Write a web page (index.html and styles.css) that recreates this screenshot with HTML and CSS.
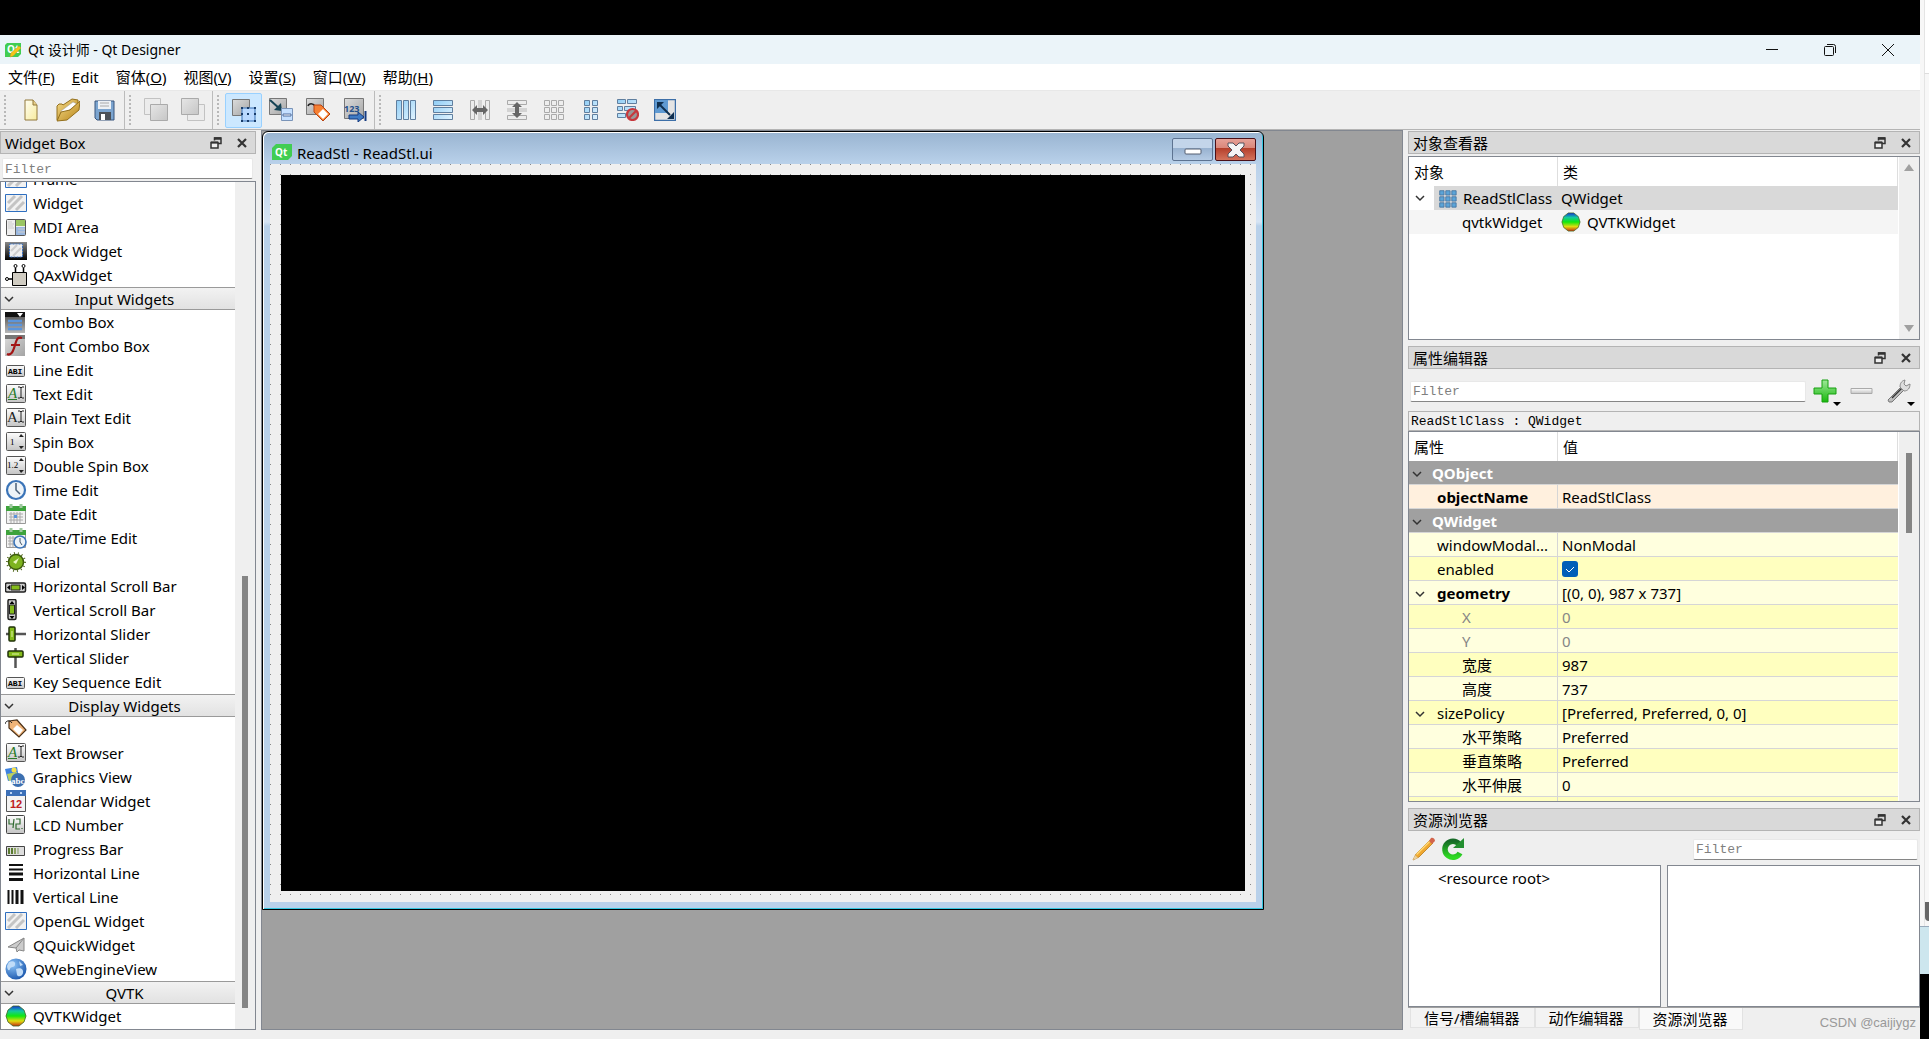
FILE: index.html
```html
<!DOCTYPE html>
<html lang="zh-CN">
<head>
    <meta charset="UTF-8">
    <meta name="viewport" content="width=device-width, initial-scale=1.0">
    <title>Qt 设计师 - Qt Designer</title>
    <link rel="stylesheet" href="styles.css">
</head>
<body>
    <!-- gradients shared by the icons -->
    <svg class="gradients" aria-hidden="true">
        <defs>
            <linearGradient id="gSilver" x1="0" y1="0" x2="0" y2="1"><stop offset="0" stop-color="#fdfdfd"/><stop offset="1" stop-color="#c4c4c4"/></linearGradient>
            <linearGradient id="gGrey" x1="0" y1="0" x2="1" y2="1"><stop offset="0" stop-color="#dcdcdc"/><stop offset="1" stop-color="#a4a4a4"/></linearGradient>
            <linearGradient id="gLight" x1="0" y1="0" x2="1" y2="1"><stop offset="0" stop-color="#e6e6e6"/><stop offset="1" stop-color="#c6c6c6"/></linearGradient>
            <linearGradient id="gBlue" x1="0" y1="0" x2="1" y2="1"><stop offset="0" stop-color="#8fcdf5"/><stop offset="1" stop-color="#e2f4ff"/></linearGradient>
            <linearGradient id="gGold" x1="0" y1="0" x2="1" y2="1"><stop offset="0" stop-color="#f5dc8c"/><stop offset="1" stop-color="#b88416"/></linearGradient>
            <linearGradient id="gPaper" x1="0" y1="0" x2="1" y2="1"><stop offset="0" stop-color="#fffef2"/><stop offset="1" stop-color="#f7eb9d"/></linearGradient>
            <linearGradient id="gGreen" x1="0" y1="0" x2="0" y2="1"><stop offset="0" stop-color="#9fe89a"/><stop offset="1" stop-color="#18b80c"/></linearGradient>
            <linearGradient id="gReload" x1="0" y1="0" x2="0" y2="1"><stop offset="0" stop-color="#176b28"/><stop offset="1" stop-color="#2edb22"/></linearGradient>
            <linearGradient id="gVtk" x1="0" y1="0" x2="0" y2="1"><stop offset="0" stop-color="#1434d8"/><stop offset=".25" stop-color="#14c8a0"/><stop offset=".5" stop-color="#10e810"/><stop offset=".75" stop-color="#e0dc10"/><stop offset="1" stop-color="#c83010"/></linearGradient>
            <radialGradient id="gGlobe" cx=".35" cy=".3" r=".8"><stop offset="0" stop-color="#8cc4f8"/><stop offset="1" stop-color="#1450a8"/></radialGradient>
            <linearGradient id="gDark" x1="0" y1="0" x2="0" y2="1"><stop offset="0" stop-color="#444"/><stop offset="1" stop-color="#b8b8b8"/></linearGradient>
            <linearGradient id="gDock" x1="0" y1="0" x2="0" y2="1"><stop offset="0" stop-color="#888"/><stop offset="1" stop-color="#000"/></linearGradient>
        </defs>
    </svg>

    <!-- icon sprite -->
    <svg class="sprite" aria-hidden="true">
        <symbol id="chevron" viewBox="0 0 10 10"><path d="M1 3l4 4 4-4" fill="none" stroke="#333" stroke-width="1.5"/></symbol>
        <symbol id="float" viewBox="0 0 12 12"><path d="M4.500 3.500V1h6.500v5.500H8" fill="none" stroke="#333" stroke-width="1.500"/><path d="M4 1.500h7" stroke="#333" stroke-width="2.500"/><path d="M1 5.500h7V11H1z" fill="#eee" stroke="#333" stroke-width="1.500"/><path d="M1 5.500h7" stroke="#333" stroke-width="2"/></symbol>
        <symbol id="cross" viewBox="0 0 12 12"><path d="M2 2l8 8M10 2l-8 8" stroke="#333" stroke-width="2.200"/></symbol>
        <symbol id="designer" viewBox="0 0 18 18"><path d="M3 2h14v11l-3 3H1V4z" fill="#41cd52"/><text x="3" y="12" class="ico-qt">Qt</text><path d="M6 16l1-4 8-7 2 2-8 8z" fill="#f5c518" stroke="#c99a20" stroke-width=".5"/></symbol>
        <symbol id="qt" viewBox="0 0 20 16"><path d="M4 0h16v12l-4 4H0V4z" fill="#41cd52"/><text x="3" y="12" class="ico-qt">Qt</text></symbol>
        <symbol id="new" viewBox="0 0 24 24"><path d="M6 2h8l4 5v15H6z" fill="url(#gPaper)" stroke="#92783a"/><path d="M14 2v5h4" fill="#e8cf88" stroke="#92783a"/></symbol>
        <symbol id="open" viewBox="0 0 24 24"><path d="M1 22V8l2-2h3l1 1 9-6 6 1v6z" fill="url(#gGold)" stroke="#94701c"/><path d="M5 13l12-9 4 2-9 7-7 4z" fill="#fff" stroke="#999" stroke-width=".5"/><path d="M1 23L5 14l9-2 10-9-1 9-12 10z" fill="url(#gGold)" stroke="#94701c"/></symbol>
        <symbol id="save" viewBox="0 0 24 24"><path d="M2 3h19v19H4l-2-2z" fill="#7ba4cf" stroke="#38557c"/><path d="M5 3h13v8H5z" fill="#edf1f5"/><path d="M7 5h9M7 8h9" stroke="#aaa"/><path d="M6 14h12v8H6z" fill="#4c5158"/><path d="M8 16h4v6H8z" fill="#fff"/></symbol>
        <symbol id="raise" viewBox="0 0 24 24"><path d="M.5.500h16v16H.5z" fill="#ececec" stroke="#c2c2c2"/><path d="M6.500 6.500h17v16h-17z" fill="url(#gLight)" stroke="#aaa"/></symbol>
        <symbol id="lower" viewBox="0 0 24 24"><path d="M6.500 6.500h17v16h-17z" fill="#ececec" stroke="#c2c2c2"/><path d="M.5.500h17v16H.5z" fill="url(#gLight)" stroke="#aaa"/></symbol>
        <symbol id="widgets" viewBox="0 0 24 24"><path d="M.5 1.500h17v16H.5z" fill="url(#gGrey)" stroke="#777"/><path d="M10 10h13v13H10z" fill="#b9d9ff" stroke="#3970b4"/><path d="M9 9h2v2H9zM15 9h2v2h-2zM22 9h2v2h-2zM9 15h2v2H9zM15 15h2v2h-2zM22 15h2v2h-2zM9 22h2v2H9zM15 22h2v2h-2zM22 22h2v2h-2z" fill="#183c6a"/></symbol>
        <symbol id="signals" viewBox="0 0 24 24"><path d="M.5.500h17v16H.5z" fill="url(#gGrey)" stroke="#777"/><path d="M1 2l10 9" stroke="#164455" stroke-width="2"/><path d="M13 13l-1-8-7 7z" fill="#164455"/><path d="M12.500 10.500h11v12h-11z" fill="#c5e0ff" stroke="#7a94b8"/><path d="M14 16h8v2h-8z" fill="#fff" stroke="#4c6a9c"/></symbol>
        <symbol id="buddies" viewBox="0 0 24 24"><path d="M.5.500h17v16H.5z" fill="url(#gGrey)" stroke="#777"/><path d="M2 8c1-3 5-3 7 0" fill="none" stroke="#222" stroke-width="1.500"/><path d="M8 7h7l9 9-7 7-9-9z" fill="#f68032" stroke="#b94312"/><path d="M17 11l5 5-5 5-5-5z" fill="#fff"/></symbol>
        <symbol id="taborder" viewBox="0 0 24 24"><path d="M1.500.500h19v20h-19z" fill="url(#gGrey)" stroke="#777"/><text x="1" y="14" class="ico-123">123</text><path d="M6 17h9v-3l6 5-6 5v-3H6z" fill="#3f7bc4" stroke="#143a80"/><path d="M22.500 13v10" stroke="#143a80" stroke-width="2"/></symbol>
        <symbol id="hlay" viewBox="0 0 22 22"><path d="M1.500 1.500h5v19h-5zM8.500 1.500h5v19h-5zM15.500 1.500h5v19h-5z" fill="url(#gBlue)" stroke="#607f9f"/></symbol>
        <symbol id="vlay" viewBox="0 0 22 22"><path d="M1.500 1.500h19v5h-19zM1.500 8.500h19v5h-19zM1.500 15.500h19v5h-19z" fill="url(#gBlue)" stroke="#607f9f"/></symbol>
        <symbol id="hsplit" viewBox="0 0 22 22"><path d="M1.500 1.500h4v19h-4zM16.500 1.500h4v19h-4z" fill="#ececec" stroke="#aaa"/><path d="M10 1v20M12 1v20" stroke="#aaa" stroke-width=".8"/><path d="M3 11l5-5v3h6V6l5 5-5 5v-3H8v3z" fill="#666"/></symbol>
        <symbol id="vsplit" viewBox="0 0 22 22"><path d="M1.500 1.500h19v4h-19zM1.500 16.500h19v4h-19z" fill="#ececec" stroke="#aaa"/><path d="M1 10h20M1 12h20" stroke="#aaa" stroke-width=".8"/><path d="M11 3l5 5h-3v6h3l-5 5-5-5h3V8H6z" fill="#666"/></symbol>
        <symbol id="grid" viewBox="0 0 22 22"><path d="M1.500 1.500h5v5h-5zM8.500 1.500h5v5h-5zM15.500 1.500h5v5h-5zM1.500 8.500h5v5h-5zM8.500 8.500h5v5h-5zM15.500 8.500h5v5h-5zM1.500 15.500h5v5h-5zM8.500 15.500h5v5h-5zM15.500 15.500h5v5h-5z" fill="#eee" stroke="#aaa"/></symbol>
        <symbol id="form" viewBox="0 0 22 22"><path d="M4.500 1.500h5v5h-5zM12.500 1.500h5v5h-5zM4.500 8.500h5v5h-5zM12.500 8.500h5v5h-5zM4.500 15.500h5v5h-5zM12.500 15.500h5v5h-5z" fill="url(#gBlue)" stroke="#607f9f"/></symbol>
        <symbol id="break" viewBox="0 0 22 22"><path d="M.5.500h8v4h-8zM10.500.500h9v4h-9zM.5 7.500h5v4h-5zM7.500 7.500h11v4h-11zM.5 14.500h8v4h-8z" fill="url(#gBlue)" stroke="#607f9f"/><circle cx="15.500" cy="15.500" r="5.500" fill="#999" stroke="#c7383d" stroke-width="2.200"/><path d="M11.500 19.500l8-8" stroke="#c7383d" stroke-width="2.200"/></symbol>
        <symbol id="adjust" viewBox="0 0 22 22"><path d="M.5.500h21v21H.5z" fill="#e4e4e4" stroke="#3d6fa8" stroke-width="1.500"/><path d="M1 1h13v13H1z" fill="#5f9ad2"/><path d="M6 6l10 10" stroke="#103050" stroke-width="2"/><path d="M3 3h7l-7 7zM20 20h-7l7-7z" fill="#103050"/></symbol>
        <symbol id="plus" viewBox="0 0 24 24"><path d="M9 1h6v8h8v6h-8v8H9v-8H1V9h8z" fill="url(#gGreen)" stroke="#16a010"/></symbol>
        <symbol id="minus" viewBox="0 0 24 24"><path d="M1 9.500h21v5H1z" fill="url(#gSilver)" stroke="#aaa"/></symbol>
        <symbol id="wrench" viewBox="0 0 24 24"><path d="M1 21L14 8l3 3L5 23H2z" fill="url(#gGrey)" stroke="#777"/><path d="M5 19l10-10" stroke="#333" stroke-width="1.500"/><path d="M13 8c0-3 1-6 5-7l-1 4 2 2 4-2c0 4-2 7-6 7z" fill="#ddd" stroke="#888"/></symbol>
        <symbol id="pencil" viewBox="0 0 24 24"><path d="M1 23l3-6L18 3l3 3L7 20z" fill="#f0a830" stroke="#b87818" stroke-width=".8"/><path d="M4 17L18 3l1 1L5 18z" fill="#ffd978"/><path d="M1 23l2-5 3 3z" fill="#e8cf9c"/><path d="M17 4l2-3c2-1 4 1 4 3l-3 3z" fill="#d2644c"/></symbol>
        <symbol id="reload" viewBox="0 0 24 24"><path d="M19 16a8 8 0 1 1-1-9" fill="none" stroke="url(#gReload)" stroke-width="5.500"/><path d="M23 1v10H12z" fill="#238f30"/></symbol>
        <symbol id="gridlay" viewBox="0 0 22 22"><path d="M2 2h5v5H2zM9 2h5v5H9zM16 2h5v5h-5zM2 9h5v5H2zM9 9h5v5H9zM16 9h5v5h-5zM2 16h5v5H2zM9 16h5v5H9zM16 16h5v5h-5z" fill="#5ba4d8" stroke="#4574a0"/></symbol>
        <symbol id="vtk" viewBox="0 0 22 22"><path d="M8 1h6l5 4 2 6-2 6-5 4H8l-5-4-2-6 2-6z" fill="url(#gVtk)" stroke="#3c6820" stroke-width=".8"/></symbol>
        <symbol id="wgt" viewBox="0 0 22 22"><path d="M.5 2.500h21v17H.5z" fill="#f2f2f2" stroke="#2f6fc0"/><path d="M3 11l7-7M3 18L17 4M11 18l8-8" stroke="#c4c4c4" stroke-width="3"/></symbol>
        <symbol id="mdi" viewBox="0 0 22 22"><rect x="1.500" y="3.500" width="19" height="16" rx="1" fill="#eee" stroke="#555"/><path d="M11 4h9v6h-9z" fill="#9ac562"/><path d="M11 11h9v8h-9z" fill="#9ab8e0"/><path d="M3 6h4M3 8h6M3 10h5M3 12h6M13 13h7M13 16h7" stroke="#ccc"/><path d="M10.500 4v15" stroke="#666"/></symbol>
        <symbol id="dock" viewBox="0 0 22 22"><path d="M0 2h22v18H0z" fill="url(#gDock)"/><path d="M4.500 4h13v13h-13z" fill="#eee" stroke="#3a70c0" stroke-dasharray="2 1"/><path d="M6 11l6-6M8 16l8-8" stroke="#ccc" stroke-width="2"/></symbol>
        <symbol id="ax" viewBox="0 0 22 22"><path d="M7.500 8.500h14v13h-14z" fill="#d0ccc2" stroke="#000"/><path d="M10.500 8V4M18.500 8V4M7 15H3" stroke="#000" stroke-width="1.500"/><circle cx="10.500" cy="2" r="1.500" fill="#fff" stroke="#000"/><circle cx="18.500" cy="2" r="1.500" fill="#fff" stroke="#000"/><circle cx="2" cy="15" r="1.500" fill="#fff" stroke="#000"/></symbol>
        <symbol id="combo" viewBox="0 0 22 22"><path d="M0 1h20v21H0z" fill="url(#gDark)"/><path d="M0 1h20v5H0z" fill="#111"/><path d="M12 2h6l-3 4z" fill="#fff"/><path d="M3 10h14M3 14h14M3 18h14" stroke="#5b95dc" stroke-width="2.500"/></symbol>
        <symbol id="fontcombo" viewBox="0 0 22 22"><path d="M0 0h20v21H0z" fill="url(#gGrey)"/><path d="M0 0h20v4H0z" fill="#777"/><path d="M2 19c4 2 6-2 8-9s3-8 7-7M6 10h9" fill="none" stroke="#a31414" stroke-width="2.200"/></symbol>
        <symbol id="line" viewBox="0 0 22 22"><rect x="1.500" y="6.500" width="18" height="11" rx="1" fill="url(#gSilver)" stroke="#555"/><text x="3" y="15" class="ico-abi">ABI</text></symbol>
        <symbol id="text" viewBox="0 0 22 22"><rect x="1.500" y="1.500" width="19" height="18" rx="1" fill="url(#gSilver)" stroke="#555"/><text x="3" y="15" class="ico-ai ico-ai-green">A</text><path d="M13 4h2l1 1 1-1h2M16 5v9M13 15h2l1-1 1 1h2" fill="none" stroke="#222"/><path d="M3 16.500h9" stroke="#2a7a2a"/></symbol>
        <symbol id="plain" viewBox="0 0 22 22"><rect x="1.500" y="1.500" width="19" height="18" rx="1" fill="url(#gSilver)" stroke="#555"/><text x="2" y="15" class="ico-ai">A</text><path d="M13 4h2l1 1 1-1h2M16 5v9M13 15h2l1-1 1 1h2" fill="none" stroke="#222"/></symbol>
        <symbol id="spin" viewBox="0 0 22 22"><rect x="1.500" y="1.500" width="19" height="18" rx="1" fill="url(#gSilver)" stroke="#555"/><text x="5" y="14" class="ico-num">1</text><path d="M14 6l2-3 3 3zM14 15l2 3 3-3z" fill="#222"/></symbol>
        <symbol id="dspin" viewBox="0 0 22 22"><rect x="1.500" y="1.500" width="19" height="18" rx="1" fill="url(#gSilver)" stroke="#555"/><text x="2" y="13" class="ico-num">1.2</text><path d="M14 6l2-3 3 3zM14 15l2 3 3-3z" fill="#222"/></symbol>
        <symbol id="clock" viewBox="0 0 22 22"><circle cx="11" cy="11" r="9" fill="#edf3f8" stroke="#3b74b8" stroke-width="2.200"/><path d="M11 4v7l4 4" fill="none" stroke="#4a6078" stroke-width="1.500"/></symbol>
        <symbol id="date" viewBox="0 0 22 22"><path d="M1.500 3.500h19v17h-19z" fill="#f2f2f2" stroke="#999"/><path d="M1 3h20v5H1z" fill="#3ea33c"/><path d="M4 11h14M4 14h14M4 17h14M6 9v11M9 9v11M12 9v11M15 9v11" stroke="#aaa"/><path d="M9 12h3v3H9z" fill="#5b95dc"/><path d="M6 1v4M16 1v4" stroke="#a0c8a0" stroke-width="3"/></symbol>
        <symbol id="datetime" viewBox="0 0 22 22"><path d="M1.500 3.500h19v17h-19z" fill="#f2f2f2" stroke="#999"/><path d="M1 3h20v5H1z" fill="#3ea33c"/><path d="M3 11h10M3 14h10M3 17h10M5 9v11M8 9v11" stroke="#aaa"/><path d="M6 1v4M16 1v4" stroke="#a0c8a0" stroke-width="3"/><circle cx="15" cy="15" r="6" fill="#edf3f8" stroke="#3b74b8" stroke-width="1.600"/><path d="M15 11v4l2 3" fill="none" stroke="#456"/></symbol>
        <symbol id="dial" viewBox="0 0 22 22"><circle cx="11" cy="11" r="9" fill="none" stroke="#556b20" stroke-width="2" stroke-dasharray="1 3"/><circle cx="11" cy="11" r="7.500" fill="#7eb31e" stroke="#3c5a0c" stroke-width="1.500"/><path d="M8 11l6-4-3 6z" fill="#eaf8c0"/></symbol>
        <symbol id="hscroll" viewBox="0 0 22 22"><rect x=".5" y="8" width="20" height="9" rx="1.500" fill="#ccc" stroke="#222" stroke-width="1.500"/><path d="M6 10h9v5H6z" fill="#85bc1c" stroke="#222"/><path d="M5 10v5l-3-2.500zM17 10v5l3-2.500z" fill="#000"/></symbol>
        <symbol id="vscroll" viewBox="0 0 22 22"><rect x="3" y=".5" width="8" height="20" rx="1.500" fill="#ccc" stroke="#222" stroke-width="1.500"/><path d="M4.500 6h5v9h-5z" fill="#85bc1c" stroke="#222"/><path d="M4.500 5h5L7 2zM4.500 17h5L7 20z" fill="#000"/></symbol>
        <symbol id="hslider" viewBox="0 0 22 22"><path d="M1 11h20" stroke="#555" stroke-width="2.500"/><rect x="4" y="4" width="6" height="14" rx="1" fill="#85bc1c" stroke="#1f3008" stroke-width="1.500"/><path d="M7 8v6" stroke="#e0f4a8"/></symbol>
        <symbol id="vslider" viewBox="0 0 22 22"><path d="M10.500 1v20" stroke="#555" stroke-width="2.500"/><rect x="3" y="4" width="15" height="6" rx="1" fill="#85bc1c" stroke="#1f3008" stroke-width="1.500"/><path d="M7 7h7" stroke="#e0f4a8"/></symbol>
        <symbol id="label" viewBox="0 0 22 22"><path d="M4 3l8-1 9 10-7 7L4 10z" fill="#f0b478" stroke="#4a3018" stroke-width="1.200"/><path d="M12 7l6 5-4 5-6-6z" fill="#fff"/><path d="M0 6c1-4 5-4 7-1" fill="none" stroke="#222"/></symbol>
        <symbol id="gview" viewBox="0 0 22 22"><path d="M0 3l12-2 2 11-11 3z" fill="#3e82e0"/><path d="M2 8l10-2 1 6-9 3z" fill="#b9d060"/><circle cx="9" cy="4" r="2.500" fill="#f4e04c"/><circle cx="13" cy="14" r="7" fill="#3c6fb0"/><text x="6" y="18" class="ico-abc">abc</text></symbol>
        <symbol id="calendar" viewBox="0 0 22 22"><path d="M1.500.5h19v21h-19z" fill="#f3f3f3" stroke="#555"/><path d="M1 0h20v6H1z" fill="#3c70b8"/><path d="M5 3h2M15 3h2" stroke="#bcd4f4" stroke-width="2"/><text x="5" y="18" class="ico-12">12</text></symbol>
        <symbol id="lcd" viewBox="0 0 22 22"><rect x="1.500" y="1.500" width="18" height="18" rx="1" fill="url(#gSilver)" stroke="#444"/><path d="M4 5v5h4M9 5l-1 9M11 5h4v5h-4v5h4M17 14v1" fill="none" stroke="#2f6a30" stroke-width="1.200"/></symbol>
        <symbol id="progress" viewBox="0 0 22 22"><path d="M1.500 8.500h18v9h-18z" fill="#ddd" stroke="#444"/><path d="M3 10h2v6H3zM6 10h2v6H6z" fill="#5a7a30"/><path d="M9 10h2v6H9z" fill="#8ba060"/><path d="M12 10h2v6h-2z" fill="#b0bca0"/></symbol>
        <symbol id="hline" viewBox="0 0 22 22"><path d="M4 3h14M4 7.500h14" stroke="#111" stroke-width="2"/><path d="M4 12h14M4 17.500h14" stroke="#111" stroke-width="3"/></symbol>
        <symbol id="vline" viewBox="0 0 22 22"><path d="M3.500 4v14M7.500 4v14" stroke="#111" stroke-width="2"/><path d="M12 4v14M17 4v14" stroke="#111" stroke-width="3"/></symbol>
        <symbol id="quick" viewBox="0 0 22 22"><path d="M3 13L19 4v13l-5-1-2 2-1-4z" fill="#ccc" stroke="#888"/><path d="M19 4l-8 10" stroke="#888"/></symbol>
        <symbol id="globe" viewBox="0 0 22 22"><circle cx="11" cy="11" r="10.500" fill="url(#gGlobe)"/><path d="M4 4c4-2 7 0 6 3s-4 1-5 4-3 0-3-3zM11 11c4-2 8 0 7 4s-5 4-6 2zM14 3l4 4-3 1z" fill="#c0dcf8"/></symbol>
    </svg>

    <div class="screen">
        <main class="desktop">
            <div class="blank"></div>

            <header class="titlebar">
                <svg class="app-icon"><use href="#designer"/></svg>
                <h1>Qt 设计师 - Qt Designer</h1>
                <div class="caption-buttons">
                    <button aria-label="Minimize"><svg viewBox="0 0 14 14"><path d="M1 6.500h12" class="thin"/></svg></button>
                    <button aria-label="Restore"><svg viewBox="0 0 14 14"><rect x="1.500" y="3.500" width="9" height="9" rx="1" class="thin"/><path d="M4 1.500h6.500q2 0 2 2V10" class="thin"/></svg></button>
                    <button aria-label="Close"><svg viewBox="0 0 14 14"><path d="M1 1l12 12M13 1L1 13" class="thin"/></svg></button>
                </div>
            </header>

            <nav class="menubar">
                <button>文件(<u>F</u>)</button>
                <button><u>E</u>dit</button>
                <button>窗体(<u>O</u>)</button>
                <button>视图(<u>V</u>)</button>
                <button>设置(<u>S</u>)</button>
                <button>窗口(<u>W</u>)</button>
                <button>帮助(<u>H</u>)</button>
            </nav>

            <div class="toolbar">
                <div class="tools">
                    <button aria-label="New"><svg><use href="#new"/></svg></button>
                    <button aria-label="Open"><svg><use href="#open"/></svg></button>
                    <button aria-label="Save"><svg><use href="#save"/></svg></button>
                </div>
                <div class="tools">
                    <button aria-label="Bring to front"><svg><use href="#raise"/></svg></button>
                    <button aria-label="Send to back"><svg><use href="#lower"/></svg></button>
                </div>
                <div class="tools">
                    <button class="active" aria-label="Edit widgets"><svg><use href="#widgets"/></svg></button>
                    <button aria-label="Edit signals"><svg><use href="#signals"/></svg></button>
                    <button aria-label="Edit buddies"><svg><use href="#buddies"/></svg></button>
                    <button aria-label="Edit tab order"><svg><use href="#taborder"/></svg></button>
                </div>
                <div class="tools small">
                    <button aria-label="Lay out horizontally"><svg><use href="#hlay"/></svg></button>
                    <button aria-label="Lay out vertically"><svg><use href="#vlay"/></svg></button>
                    <button aria-label="Horizontal splitter"><svg><use href="#hsplit"/></svg></button>
                    <button aria-label="Vertical splitter"><svg><use href="#vsplit"/></svg></button>
                    <button aria-label="Grid layout"><svg><use href="#grid"/></svg></button>
                    <button aria-label="Form layout"><svg><use href="#form"/></svg></button>
                    <button aria-label="Break layout"><svg><use href="#break"/></svg></button>
                    <button aria-label="Adjust size"><svg><use href="#adjust"/></svg></button>
                </div>
            </div>

            <div class="workspace">
                <!-- widget box -->
                <aside class="left">
                    <div class="dock-title">
                        <h2>Widget Box</h2>
                        <button aria-label="Float"><svg><use href="#float"/></svg></button>
                        <button aria-label="Close"><svg><use href="#cross"/></svg></button>
                    </div>
                    <input class="filter" type="text" placeholder="Filter" aria-label="Filter widgets">
                    <div class="frame widget-box">
                        <div class="widgets">
                            <ul>
                                <li><svg><use href="#wgt"/></svg>Frame</li>
                                <li><svg><use href="#wgt"/></svg>Widget</li>
                                <li><svg><use href="#mdi"/></svg>MDI Area</li>
                                <li><svg><use href="#dock"/></svg>Dock Widget</li>
                                <li><svg><use href="#ax"/></svg>QAxWidget</li>
                            </ul>
                            <button class="category"><svg><use href="#chevron"/></svg><span>Input Widgets</span></button>
                            <ul>
                                <li><svg><use href="#combo"/></svg>Combo Box</li>
                                <li><svg><use href="#fontcombo"/></svg>Font Combo Box</li>
                                <li><svg><use href="#line"/></svg>Line Edit</li>
                                <li><svg><use href="#text"/></svg>Text Edit</li>
                                <li><svg><use href="#plain"/></svg>Plain Text Edit</li>
                                <li><svg><use href="#spin"/></svg>Spin Box</li>
                                <li><svg><use href="#dspin"/></svg>Double Spin Box</li>
                                <li><svg><use href="#clock"/></svg>Time Edit</li>
                                <li><svg><use href="#date"/></svg>Date Edit</li>
                                <li><svg><use href="#datetime"/></svg>Date/Time Edit</li>
                                <li><svg><use href="#dial"/></svg>Dial</li>
                                <li><svg><use href="#hscroll"/></svg>Horizontal Scroll Bar</li>
                                <li><svg><use href="#vscroll"/></svg>Vertical Scroll Bar</li>
                                <li><svg><use href="#hslider"/></svg>Horizontal Slider</li>
                                <li><svg><use href="#vslider"/></svg>Vertical Slider</li>
                                <li><svg><use href="#line"/></svg>Key Sequence Edit</li>
                            </ul>
                            <button class="category"><svg><use href="#chevron"/></svg><span>Display Widgets</span></button>
                            <ul>
                                <li><svg><use href="#label"/></svg>Label</li>
                                <li><svg><use href="#text"/></svg>Text Browser</li>
                                <li><svg><use href="#gview"/></svg>Graphics View</li>
                                <li><svg><use href="#calendar"/></svg>Calendar Widget</li>
                                <li><svg><use href="#lcd"/></svg>LCD Number</li>
                                <li><svg><use href="#progress"/></svg>Progress Bar</li>
                                <li><svg><use href="#hline"/></svg>Horizontal Line</li>
                                <li><svg><use href="#vline"/></svg>Vertical Line</li>
                                <li><svg><use href="#wgt"/></svg>OpenGL Widget</li>
                                <li><svg><use href="#quick"/></svg>QQuickWidget</li>
                                <li><svg><use href="#globe"/></svg>QWebEngineView</li>
                            </ul>
                            <button class="category"><svg><use href="#chevron"/></svg><span>QVTK</span></button>
                            <ul>
                                <li><svg><use href="#vtk"/></svg>QVTKWidget</li>
                            </ul>
                        </div>
                        <div class="scroll scroll-widgets"><div class="thumb"></div></div>
                    </div>
                </aside>

                <!-- form being edited -->
                <section class="mdi">
                    <div class="subwindow">
                        <div class="sub-title">
                            <svg class="qt-icon"><use href="#qt"/></svg>
                            <h2>ReadStl - ReadStl.ui</h2>
                            <button class="sub-min" aria-label="Minimize"><svg viewBox="0 0 18 16"><rect x="1" y="7" width="16" height="5" rx="1" fill="#fff" stroke="#555e70"/></svg></button>
                            <button class="sub-close" aria-label="Close"><svg viewBox="0 0 18 16"><path d="M1 1h5l3 3 3-3h5v3l-4 4 4 4v3h-5l-3-3-3 3H1v-3l4-4-4-4z" fill="#f5f5f5" stroke="#54505c"/></svg></button>
                        </div>
                        <div class="form-grid"><div class="vtk-view"></div></div>
                    </div>
                </section>

                <aside class="right">
                    <!-- object inspector -->
                    <section class="dock inspector">
                        <div class="dock-title">
                            <h2>对象查看器</h2>
                            <button aria-label="Float"><svg><use href="#float"/></svg></button>
                            <button aria-label="Close"><svg><use href="#cross"/></svg></button>
                        </div>
                        <div class="frame tree">
                            <table>
                                <thead>
                                    <tr><th>对象</th><th>类</th></tr>
                                </thead>
                                <tbody>
                                    <tr class="selected">
                                        <td class="root"><div class="node"><svg class="arrow"><use href="#chevron"/></svg><span class="node-name"><svg><use href="#gridlay"/></svg>ReadStlClass</span></div></td>
                                        <td>QWidget</td>
                                    </tr>
                                    <tr class="odd">
                                        <td class="child">qvtkWidget</td>
                                        <td><div class="class-name"><svg><use href="#vtk"/></svg>QVTKWidget</div></td>
                                    </tr>
                                </tbody>
                            </table>
                            <div class="scroll scroll-arrows"><i class="up"></i><i class="down"></i></div>
                        </div>
                    </section>

                    <!-- property editor -->
                    <section class="dock properties">
                        <div class="dock-title">
                            <h2>属性编辑器</h2>
                            <button aria-label="Float"><svg><use href="#float"/></svg></button>
                            <button aria-label="Close"><svg><use href="#cross"/></svg></button>
                        </div>
                        <div class="prop-tools">
                            <input class="filter" type="text" placeholder="Filter" aria-label="Filter properties">
                            <button class="has-menu" aria-label="Add property"><svg><use href="#plus"/></svg></button>
                            <button aria-label="Remove property"><svg><use href="#minus"/></svg></button>
                            <button class="has-menu" aria-label="Configure"><svg><use href="#wrench"/></svg></button>
                        </div>
                        <div class="object-label">ReadStlClass : QWidget</div>
                        <div class="frame props">
                            <table>
                                <thead>
                                    <tr><th>属性</th><th>值</th></tr>
                                </thead>
                                <tbody>
                                    <tr class="group"><td colspan="2"><svg class="arrow"><use href="#chevron"/></svg>QObject</td></tr>
                                    <tr class="peach"><td class="bold">objectName</td><td>ReadStlClass</td></tr>
                                    <tr class="group"><td colspan="2"><svg class="arrow"><use href="#chevron"/></svg>QWidget</td></tr>
                                    <tr><td>windowModal...</td><td>NonModal</td></tr>
                                    <tr class="alt"><td><label for="enabled">enabled</label></td><td><input type="checkbox" id="enabled" checked></td></tr>
                                    <tr><td class="parent bold"><svg class="arrow"><use href="#chevron"/></svg>geometry</td><td>[(0, 0), 987 x 737]</td></tr>
                                    <tr class="alt muted"><td class="sub">X</td><td>0</td></tr>
                                    <tr class="muted"><td class="sub">Y</td><td>0</td></tr>
                                    <tr class="alt"><td class="sub">宽度</td><td>987</td></tr>
                                    <tr><td class="sub">高度</td><td>737</td></tr>
                                    <tr class="alt"><td class="parent"><svg class="arrow"><use href="#chevron"/></svg>sizePolicy</td><td>[Preferred, Preferred, 0, 0]</td></tr>
                                    <tr><td class="sub">水平策略</td><td>Preferred</td></tr>
                                    <tr class="alt"><td class="sub">垂直策略</td><td>Preferred</td></tr>
                                    <tr><td class="sub">水平伸展</td><td>0</td></tr>
                                    <tr class="alt"><td class="sub"></td><td></td></tr>
                                </tbody>
                            </table>
                            <div class="scroll scroll-props"><div class="thumb"></div></div>
                        </div>
                    </section>

                    <!-- resource browser -->
                    <section class="dock resources">
                        <div class="dock-title">
                            <h2>资源浏览器</h2>
                            <button aria-label="Float"><svg><use href="#float"/></svg></button>
                            <button aria-label="Close"><svg><use href="#cross"/></svg></button>
                        </div>
                        <div class="res-tools">
                            <button aria-label="Edit resources"><svg><use href="#pencil"/></svg></button>
                            <button aria-label="Reload"><svg><use href="#reload"/></svg></button>
                            <input class="filter" type="text" placeholder="Filter" aria-label="Filter resources">
                        </div>
                        <div class="res-panes">
                            <div class="frame res-tree">&lt;resource root&gt;</div>
                            <div class="frame"></div>
                        </div>
                        <div class="tabs">
                            <button>信号/槽编辑器</button>
                            <button>动作编辑器</button>
                            <button class="current">资源浏览器</button>
                            <span class="watermark">CSDN @caijiygz</span>
                        </div>
                    </section>
                </aside>
            </div>
        </main>

        <!-- edge of the window behind -->
        <div class="behind">
            <div class="behind-top"></div>
            <div class="behind-page"><div class="behind-button"></div></div>
            <div class="behind-sky"></div>
            <div class="behind-bottom"></div>
        </div>
    </div>
</body>
</html>
```

FILE: styles.css
```css
:root {
    --bg: #efefef;
    --frame: #828790;
    --dock: #d9d9d9;
    --dock-border: #b4b4b4;
    --mdi: #a0a0a0;
    --aero: #b9d1ea;
    --ui: "Noto Sans", "Noto Sans CJK SC", sans-serif;
    --mono: "Liberation Mono", "Noto Sans CJK SC", monospace;
}
* {
    box-sizing: border-box;
}
body {
    margin: 0;
    font-family: var(--ui);
    font-size: 15px;
    line-height: 24px;
    color: #000;
    background: var(--bg);
}
button {
    font: inherit;
    color: inherit;
    background: none;
    border: none;
    padding: 0;
}
h1, h2 {
    margin: 0;
    font-size: 15px;
    font-weight: normal;
}
ul {
    list-style: none;
    margin: 0;
    padding: 0;
}
svg {
    display: block;
    flex: none;
}
.gradients {
    position: absolute;
    width: 0;
    height: 0;
}
.sprite {
    display: none;
}
.screen {
    display: flex;
    height: 100vh;
    overflow: hidden;
}
.desktop {
    flex: 1;
    min-width: 0;
    display: flex;
    flex-direction: column;
}
.blank {
    height: 35px;
    background: #000;
}

/* title bar */
.titlebar {
    display: flex;
    align-items: center;
    gap: 6px;
    height: 29px;
    padding: 0 3px 0 4px;
    background: #ebf4f9;
}
.titlebar h1 {
    flex: 1;
    font-size: 14px;
}
.app-icon {
    width: 18px;
    height: 18px;
}
.caption-buttons {
    display: flex;
}
.caption-buttons button {
    display: grid;
    place-items: center;
    width: 58px;
    height: 29px;
}
.caption-buttons svg {
    width: 14px;
    height: 14px;
}
.thin {
    fill: none;
    stroke: #111;
}

/* menu */
.menubar {
    display: flex;
    align-items: center;
    gap: 17px;
    height: 27px;
    padding: 0 8px;
    background: #fff;
    border-bottom: 1px solid #e8e8e8;
}

/* toolbar */
.toolbar {
    display: flex;
    height: 39px;
    border-bottom: 1px solid var(--dock-border);
}
.tools {
    display: flex;
    align-items: center;
    padding-right: 1px;
    border-right: 1px solid #bbb;
}
.tools:last-child {
    border: none;
}
.tools::before {
    content: "";
    width: 2px;
    height: 30px;
    margin: 0 6px 0 4px;
    background: repeating-linear-gradient(#b8b8b8 0 2px, transparent 2px 4px);
}
.tools button {
    display: grid;
    place-items: center;
    width: 37px;
    height: 35px;
    border: 1px solid transparent;
    border-radius: 2px;
}
.tools .active {
    background: #cce8ff;
    border-color: #99d1ff;
}
.tools svg {
    width: 24px;
    height: 24px;
}
.small svg {
    width: 22px;
    height: 22px;
}

/* docks */
.workspace {
    flex: 1;
    min-height: 0;
    display: flex;
    gap: 5px;
    padding-bottom: 9px;
}
.left {
    flex: none;
    width: 256px;
    display: flex;
    flex-direction: column;
    padding-top: 1px;
}
.right {
    flex: none;
    width: 512px;
    display: flex;
    flex-direction: column;
    gap: 6px;
    padding-top: 1px;
}
.dock {
    display: flex;
    flex-direction: column;
    min-height: 0;
}
.dock-title {
    flex: none;
    display: flex;
    align-items: center;
    gap: 14px;
    height: 23px;
    padding: 0 7px 0 4px;
    background: var(--dock);
    border: 1px solid var(--dock-border);
}
.dock-title h2 {
    flex: 1;
}
.dock-title svg {
    width: 12px;
    height: 12px;
}
.frame {
    background: #fff;
    border: 1px solid var(--frame);
}
.filter {
    height: 21px;
    padding: 1px 2px 0;
    border: 1px solid #e8e8e8;
    border-bottom-color: #868686;
    border-radius: 2px;
    background: #fff;
    font-family: var(--mono);
    font-size: 13px;
    outline: none;
}
.filter::placeholder {
    color: #7f7f7f;
}
.scroll {
    flex: none;
    width: 20px;
    background: var(--bg);
}
.thumb {
    width: 6px;
    margin: 0 auto;
    background: #858585;
}

/* widget box */
.left .filter {
    margin: 4px 3px 2px 2px;
}
.widget-box {
    flex: 1;
    min-height: 0;
    display: flex;
}
.widgets {
    flex: 1;
    display: flex;
    flex-direction: column;
    justify-content: flex-end;
    padding-bottom: 1px;
    overflow: hidden;
}
.widgets li {
    display: flex;
    align-items: center;
    gap: 6px;
    height: 24px;
    padding-left: 4px;
}
.widgets li svg {
    width: 22px;
    height: 22px;
}
.category {
    flex: none;
    display: flex;
    align-items: center;
    height: 23px;
    padding-left: 3px;
    border-top: 1px solid #9a9a9a;
    border-bottom: 1px solid #9a9a9a;
    background: linear-gradient(#f2f2f2, #e2e2e2);
}
.category span {
    flex: 1;
}
.category svg, .arrow {
    width: 10px;
    height: 10px;
}
.scroll-widgets {
    padding-top: 394px;
    padding-bottom: 21px;
}
.scroll-widgets .thumb {
    height: 100%;
}

/* mdi area */
.mdi {
    flex: 1;
    min-width: 0;
    display: flex;
    padding: 0 138px 119px 0;
    background: var(--mdi);
    border: 1px solid var(--frame);
}
.subwindow {
    flex: 1;
    display: flex;
    flex-direction: column;
    padding: 0 7px 7px;
    border: 1px solid #000;
    border-radius: 6px 6px 0 0;
    background: linear-gradient(#99b4d1, var(--aero) 32px, #d6e4f4 90px, var(--aero) 94px);
    box-shadow: inset 1px 1px 0 #fff, inset -1px -1px 0 #35c6e0;
}
.sub-title {
    display: flex;
    align-items: center;
    height: 32px;
    padding-left: 2px;
}
.sub-title h2 {
    flex: 1;
    padding: 10px 0 0 5px;
}
.qt-icon {
    width: 20px;
    height: 16px;
    margin-top: 8px;
}
.sub-title button {
    display: grid;
    place-items: center;
    width: 41px;
    height: 23px;
    margin: 3px 0 0 2px;
    border: 1px solid #5d7391;
    border-radius: 2px;
}
.sub-title button svg {
    width: 18px;
    height: 16px;
}
.sub-min {
    background: linear-gradient(#c3d5ea 45%, #98b2d0 45%, #b5cbe4);
}
.sub-title .sub-close {
    border-color: #4a1018;
    background: linear-gradient(#e6a197 0, #d98578 45%, #b5402c 45%, #d4735c);
}
.form-grid {
    flex: 1;
    display: flex;
    padding: 11px;
    background: var(--bg) url("data:image/svg+xml,%3Csvg xmlns='http://www.w3.org/2000/svg' width='10' height='10'%3E%3Crect width='1' height='1' fill='%23888'/%3E%3C/svg%3E");
}
.vtk-view {
    flex: 1;
    background: #000;
}

/* tables */
table {
    flex: 1;
    width: 100%;
    align-self: flex-start;
    table-layout: fixed;
    border-spacing: 0;
    border-right: 1px solid #fff;
}
th, td {
    height: 24px;
    padding: 0 3px;
    line-height: 22px;
    overflow: hidden;
    white-space: nowrap;
}
th {
    height: 29px;
    padding: 0 5px;
    font-weight: normal;
    text-align: left;
    border-right: 1px solid #dedede;
}
th:first-child {
    width: 149px;
}

/* object inspector */
.inspector {
    height: 209px;
}
.tree, .props {
    flex: 1;
    min-height: 0;
    display: flex;
    overflow: hidden;
    margin-top: 2px;
}
.root {
    padding: 0;
}
.child {
    padding: 0 0 0 53px;
}
.odd td {
    background: #f5f5f5;
}
.node {
    display: flex;
    align-items: center;
    padding-left: 6px;
}
.node-name {
    flex: 1;
    display: flex;
    align-items: center;
    gap: 6px;
    height: 24px;
    margin-left: 9px;
    padding-left: 4px;
    background: var(--dock);
}
.node-name svg {
    width: 19px;
    height: 19px;
}
.selected td:last-child {
    background: var(--dock);
}
.class-name {
    display: flex;
    align-items: center;
    gap: 6px;
}
.class-name svg {
    width: 20px;
    height: 20px;
}
.scroll-arrows {
    display: flex;
    flex-direction: column;
    justify-content: space-between;
    align-items: center;
    padding: 7px 0;
}
.up, .down {
    border: 5px solid transparent;
}
.up {
    border-top: none;
    border-bottom: 7px solid #a0a0a0;
}
.down {
    border-bottom: none;
    border-top: 7px solid #a0a0a0;
}

/* property editor */
.properties {
    height: 456px;
}
.prop-tools {
    display: flex;
    align-items: center;
    height: 42px;
    padding: 2px 9px 0 2px;
}
.prop-tools .filter {
    flex: 1;
    margin-right: 7px;
}
.prop-tools button {
    position: relative;
    width: 24px;
    height: 24px;
    margin-right: 13px;
}
.prop-tools button:last-child {
    margin-right: 0;
}
.prop-tools svg, .res-tools svg {
    width: 24px;
    height: 24px;
}
.has-menu::after {
    content: "";
    position: absolute;
    right: -4px;
    bottom: -3px;
    border: 4px solid transparent;
    border-top-color: #000;
    border-bottom: none;
}
.object-label {
    height: 20px;
    padding-left: 2px;
    border: 1px solid var(--dock-border);
    font-family: var(--mono);
    font-size: 13px;
    line-height: 20px;
}
.props {
    margin-top: 0;
}
.props td {
    padding-left: 4px;
    border-bottom: 1px solid #d6d6d6;
    background: #ffffde;
}
.props td:first-child {
    padding-left: 28px;
    padding-right: 0;
    border-right: 1px solid #d6d6d6;
}
.props .alt td {
    background: #ffffbf;
}
.props .peach td {
    background: #fff0de;
}
.props .group td {
    padding-left: 3px;
    border-right: none;
    background: var(--mdi);
    color: #fff;
    font-weight: bold;
}
.props td.sub:first-child {
    padding-left: 53px;
}
.props td.parent:first-child {
    padding-left: 6px;
}
.arrow {
    display: inline-block;
    margin-right: 10px;
}
.parent .arrow {
    margin-right: 12px;
}
.node .arrow {
    margin: 0;
}
.bold {
    font-weight: bold;
}
.muted {
    color: #868686;
}
.props input {
    appearance: none;
    display: block;
    width: 16px;
    height: 16px;
    margin: 0;
    border-radius: 3px;
    background: #005fb8 url("data:image/svg+xml,%3Csvg xmlns='http://www.w3.org/2000/svg' width='16' height='16'%3E%3Cpath d='M4 8l3 3 5-5' fill='none' stroke='white'/%3E%3C/svg%3E");
}
.scroll-props {
    padding-top: 21px;
}
.scroll-props .thumb {
    height: 80px;
}

/* resource browser */
.resources {
    flex: 1;
}
.res-tools {
    display: flex;
    align-items: center;
    gap: 5px;
    height: 34px;
    padding: 2px 2px 0 4px;
}
.res-tools .filter {
    width: 225px;
    margin-left: auto;
}
.res-panes {
    flex: 1;
    display: grid;
    grid-template-columns: 1fr 1fr;
    gap: 6px;
}
.res-tree {
    padding-left: 29px;
}
.tabs {
    display: flex;
    align-items: flex-start;
    height: 23px;
    padding-left: 2px;
    border-top: 1px solid #a0a0a0;
}
.tabs button {
    height: 20px;
    padding: 0 14px 0 13px;
    border: 1px solid #e2e2e2;
    border-top: none;
    background: #f3f3f3;
    line-height: 20px;
}
.tabs .current {
    height: 22px;
    background: #f9f9f9;
}
.watermark {
    margin: 3px 4px 0 auto;
    font-family: "Liberation Sans", sans-serif;
    font-size: 13px;
    color: #999;
}

/* strip on the right */
.behind {
    flex: none;
    width: 9px;
    display: flex;
    flex-direction: column;
    background: #f7f7f7;
}
.behind-top {
    height: 74px;
    margin-left: 4px;
    background: #fff;
    border-left: 1px solid #e4e4e4;
    border-bottom: 1px solid #ddd;
}
.behind-page {
    flex: 1;
    display: flex;
    align-items: flex-end;
    margin-left: 4px;
    padding-bottom: 5px;
    border-left: 1px solid #e4e4e4;
}
.behind-button {
    width: 5px;
    height: 19px;
    border-radius: 0 0 0 5px;
    background: #666;
}
.behind-sky {
    height: 48px;
    background: #cde6ee;
    border-top: 1px solid #9ab;
}
.behind-bottom {
    height: 65px;
    background: #000;
}

/* lettering inside icons */
.ico-qt {
    font: bold 10px var(--ui);
    fill: #fff;
}
.ico-123 {
    font: bold 9px var(--ui);
    fill: #24508c;
}
.ico-abi {
    font: bold 8px "Liberation Mono", monospace;
}
.ico-ai {
    font: 15px "Liberation Serif", serif;
    fill: #222;
}
.ico-ai-green {
    font-style: italic;
    fill: #2a7a2a;
}
.ico-num {
    font: 9px "Liberation Serif", serif;
}
.ico-abc {
    font: bold 9px "Liberation Serif", serif;
    fill: #fff;
}
.ico-12 {
    font: bold 11px "Liberation Sans", sans-serif;
    fill: #c02020;
}
```
